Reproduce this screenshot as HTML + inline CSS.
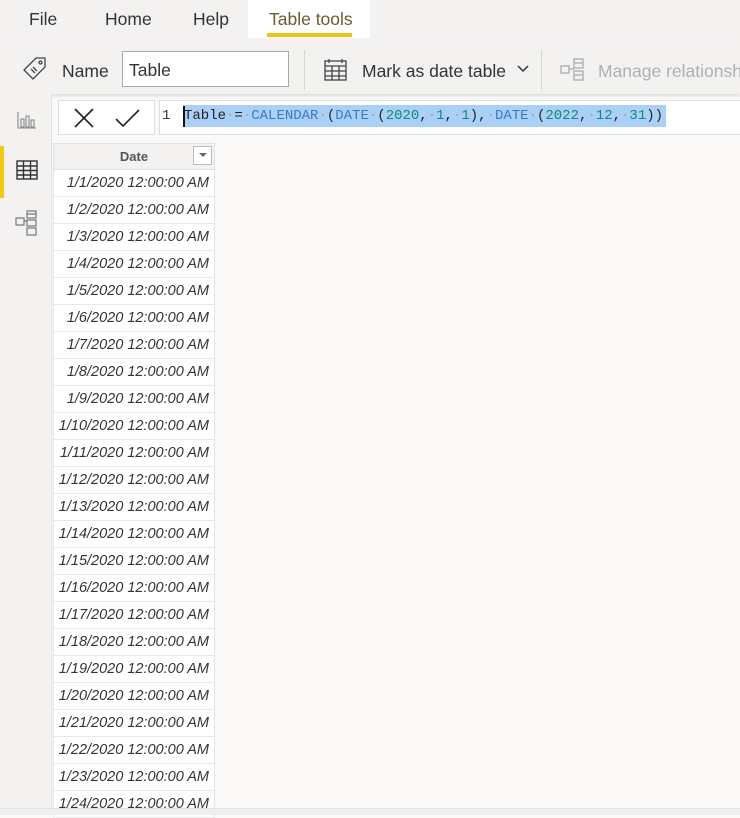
<!DOCTYPE html>
<html><head><meta charset="utf-8"><style>
*{margin:0;padding:0;box-sizing:border-box}
body{width:740px;height:815px;overflow:hidden;background:#faf9f8;font-family:"Liberation Sans",sans-serif;position:relative}
.abs{position:absolute}
.tab{position:absolute;top:9px;font-size:17.5px;color:#333}
.mono{font-family:"Liberation Mono",monospace;font-size:14px}
.row{position:absolute;left:53px;width:162px;height:27px;background:#fff;border-bottom:1px solid #e8e8e8;border-left:1px solid #e4e4e4;border-right:1px solid #e4e4e4;font-style:italic;font-size:14.5px;color:#333;text-align:right;padding-right:5px;line-height:27px;white-space:nowrap}
.k{color:#3a78bf}.n{color:#0f8a7a}.d{color:#9aa}
</style></head><body>
<div class="abs" style="left:0;top:0;width:740px;height:38px;background:#f3f2f1"></div>
<div class="abs" style="left:248px;top:0;width:122px;height:38px;background:#fff"></div>
<div class="tab" style="left:29px">File</div>
<div class="tab" style="left:105px">Home</div>
<div class="tab" style="left:193px">Help</div>
<div class="tab" style="left:269px;color:#6b5a2e">Table tools</div>
<div class="abs" style="left:267px;top:33px;width:85px;height:4px;background:#eec21c"></div>
<div class="abs" style="left:0;top:38px;width:740px;height:56px;background:#f3f2f1;box-shadow:0 2px 3px rgba(0,0,0,.12)"></div>
<svg class="abs" style="left:22px;top:56px" width="26" height="26" viewBox="0 0 26 26" fill="none" stroke="#444" stroke-width="1.3"><path d="M14 2h9v9L11 23 2 14z"/><circle cx="18.5" cy="6.5" r="1.5"/><path d="M9 13l4 4M11 11l4 4"/></svg>
<div class="abs" style="left:62px;top:61px;font-size:17.5px;color:#333">Name</div>
<div class="abs" style="left:122px;top:51px;width:167px;height:36px;background:#fff;border:1px solid #a8a8a8;font-size:17.5px;color:#333;padding:8px 0 0 6px">Table</div>
<div class="abs" style="left:304px;top:50px;width:1px;height:40px;background:#d6d6d6"></div>
<svg class="abs" style="left:323px;top:57px" width="26" height="26" viewBox="0 0 26 26" fill="none" stroke="#444" stroke-width="1.3"><rect x="2" y="4" width="21" height="19"/><path d="M2 9h21M2 14h21M2 19h21M9 9v14M16 9v14M6 2v4M19 2v4"/></svg>
<div class="abs" style="left:362px;top:61px;font-size:17.5px;color:#333">Mark as date table</div>
<svg class="abs" style="left:516px;top:64px" width="14" height="10" viewBox="0 0 14 10" fill="none" stroke="#333" stroke-width="1.5"><path d="M2 2l5 5 5-5"/></svg>
<div class="abs" style="left:541px;top:50px;width:1px;height:40px;background:#d6d6d6"></div>
<svg class="abs" style="left:559px;top:57px" width="28" height="26" viewBox="0 0 28 26" fill="none" stroke="#aaa" stroke-width="1.3"><rect x="2" y="9" width="8" height="7"/><rect x="15" y="2" width="9" height="9"/><rect x="15" y="14" width="9" height="9"/><path d="M10 12h5M15 6h9M15 18h9"/></svg>
<div class="abs" style="left:598px;top:61px;font-size:17.5px;color:#b0b0b0;white-space:nowrap">Manage relationships</div>
<div class="abs" style="left:0;top:94px;width:52px;height:721px;background:#f3f2f1;border-right:1px solid #e1e1e1"></div>
<div class="abs" style="left:0;top:146px;width:4px;height:52px;background:#f2c811"></div>
<svg class="abs" style="left:17px;top:111px" width="20" height="18" viewBox="0 0 20 18" fill="none" stroke="#888" stroke-width="1.1"><path d="M1 1v16h18"/><rect x="4" y="8" width="3" height="8"/><rect x="9" y="5" width="3" height="11"/><rect x="14" y="9" width="3" height="7"/></svg>
<svg class="abs" style="left:16px;top:160px" width="22" height="20" viewBox="0 0 22 20" fill="none" stroke="#333" stroke-width="1.4"><rect x="1" y="1" width="20" height="18"/><path d="M1 6h20M1 10.5h20M1 15h20M7.5 1v18M14.5 1v18"/></svg>
<svg class="abs" style="left:15px;top:210px" width="26" height="26" viewBox="0 0 26 26" fill="none" stroke="#777" stroke-width="1.2"><rect x="1" y="8" width="8" height="7"/><rect x="12" y="1" width="9" height="7"/><rect x="12" y="10" width="9" height="6"/><rect x="12" y="18" width="9" height="7"/><path d="M9 11h3M12 4h9"/></svg>
<div class="abs" style="left:58px;top:100px;width:97px;height:35px;background:#fff;border:1px solid #ddd"></div>
<svg class="abs" style="left:72px;top:106px" width="72" height="24" viewBox="0 0 72 24" fill="none" stroke="#222" stroke-width="1.6"><path d="M3 3l18 18M21 3L3 21M44 13l7 7 16-16"/></svg>
<div class="abs" style="left:159px;top:100px;width:590px;height:35px;background:#fff;border:1px solid #ddd"></div>
<div class="abs mono" style="left:162px;top:108px;color:#333">1</div>
<div class="abs" style="left:183px;top:105px;width:483px;height:22px;background:#abd0f7"></div>
<div class="abs" style="left:183px;top:106px;width:2px;height:21px;background:#111"></div>
<div class="abs mono" style="left:184px;top:108px;white-space:pre;color:#222">Table<span class="d">·</span>=<span class="d">·</span><span class="k">CALENDAR</span><span class="d">·</span>(<span class="k">DATE</span><span class="d">·</span>(<span class="n">2020</span>,<span class="d">·</span><span class="n">1</span>,<span class="d">·</span><span class="n">1</span>),<span class="d">·</span><span class="k">DATE</span><span class="d">·</span>(<span class="n">2022</span>,<span class="d">·</span><span class="n">12</span>,<span class="d">·</span><span class="n">31</span>))</div>
<div class="abs" style="left:53px;top:143px;width:162px;height:27px;background:#f3f2f1;border:1px solid #e1e1e1;font-size:13px;font-weight:bold;color:#555;text-align:center;line-height:25px">Date</div>
<div class="abs" style="left:193px;top:146px;width:19px;height:19px;background:#fff;border:1px solid #bbb"></div>
<div class="abs" style="left:199px;top:153px;width:0;height:0;border-left:4px solid transparent;border-right:4px solid transparent;border-top:4px solid #666"></div>
<div class="row" style="top:170px">1/1/2020 12:00:00 AM</div>
<div class="row" style="top:197px">1/2/2020 12:00:00 AM</div>
<div class="row" style="top:224px">1/3/2020 12:00:00 AM</div>
<div class="row" style="top:251px">1/4/2020 12:00:00 AM</div>
<div class="row" style="top:278px">1/5/2020 12:00:00 AM</div>
<div class="row" style="top:305px">1/6/2020 12:00:00 AM</div>
<div class="row" style="top:332px">1/7/2020 12:00:00 AM</div>
<div class="row" style="top:359px">1/8/2020 12:00:00 AM</div>
<div class="row" style="top:386px">1/9/2020 12:00:00 AM</div>
<div class="row" style="top:413px">1/10/2020 12:00:00 AM</div>
<div class="row" style="top:440px">1/11/2020 12:00:00 AM</div>
<div class="row" style="top:467px">1/12/2020 12:00:00 AM</div>
<div class="row" style="top:494px">1/13/2020 12:00:00 AM</div>
<div class="row" style="top:521px">1/14/2020 12:00:00 AM</div>
<div class="row" style="top:548px">1/15/2020 12:00:00 AM</div>
<div class="row" style="top:575px">1/16/2020 12:00:00 AM</div>
<div class="row" style="top:602px">1/17/2020 12:00:00 AM</div>
<div class="row" style="top:629px">1/18/2020 12:00:00 AM</div>
<div class="row" style="top:656px">1/19/2020 12:00:00 AM</div>
<div class="row" style="top:683px">1/20/2020 12:00:00 AM</div>
<div class="row" style="top:710px">1/21/2020 12:00:00 AM</div>
<div class="row" style="top:737px">1/22/2020 12:00:00 AM</div>
<div class="row" style="top:764px">1/23/2020 12:00:00 AM</div>
<div class="row" style="top:791px">1/24/2020 12:00:00 AM</div>
<div class="abs" style="left:0;top:808px;width:740px;height:7px;background:#f0efee;border-top:1px solid #e1e1e1"></div>
</body></html>
